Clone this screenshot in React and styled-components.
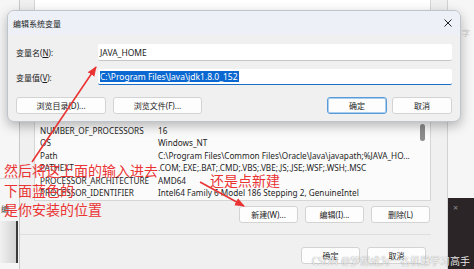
import styled, { createGlobalStyle } from "styled-components";

const GlobalStyle = createGlobalStyle`
  body {
    margin: 0;
    background: #f0f0f0;
  }
`;

const RED = "#ea3434";

const Desktop = styled.div`
  position: relative;
  width: 474px;
  height: 269px;
  overflow: hidden;
  display: grid;
  grid-template-columns: 20px 428px 26px;
  font-family: "Noto Sans", "Noto Sans CJK SC", sans-serif;
  color: #1b1b1b;
`;

/* window peeking in on the left */
const SideWindow = styled.div`
  display: flex;
  flex-direction: column;
  background: #f6f6f6;
  border-right: 1px solid #c9c9c9;
`;
const SideTop = styled.div`
  height: 178px;
  border-bottom: 1px solid #d6d6d6;
`;
const SideLabel = styled.div`
  padding: 24px 0 0 1px;
  font-size: 8px;
  color: #444;
`;
const SideBottom = styled.div`
  margin-top: auto;
  height: 42px;
  background: linear-gradient(90deg, #f1f1f1, #d3d3d3);
  border-right: 2px solid #3a3a3a;
  margin-right: 1px;
  margin-bottom: 6px;
`;

/* environment variables dialog behind */
const EnvDialog = styled.div`
  display: flex;
  flex-direction: column;
  padding: 0 16px 0 14px;
  background: #f0f0f0;
  border-right: 1px solid #d2d2d2;
`;
const UserList = styled.div`
  height: 60px;
  background: #fff;
  border: 1px solid #d6d6d6;
  border-top: none;
`;
const SystemList = styled.div`
  margin-top: 52px;
  height: 88px;
  box-sizing: border-box;
  display: flex;
  background: #fbfbfb;
  border: 1px solid #d6d6d6;
  overflow: hidden;
`;
const Rows = styled.div`
  flex: 1;
  min-width: 0;
  padding: 11px 0 0 5px;
`;
const Row = styled.div`
  display: grid;
  grid-template-columns: 118px auto;
  height: 12.4px;
  line-height: 12.4px;
  font-size: 8.2px;
  white-space: nowrap;
  color: #1e1e1e;
`;
const ScrollTrack = styled.div`
  width: 10px;
  padding-top: 10px;
`;
const Thumb = styled.div`
  width: 5px;
  height: 17px;
  border-radius: 3px;
  background: #8c8c8c;
`;
const ButtonRow = styled.div`
  display: flex;
  justify-content: flex-end;
  gap: ${(p) => p.$gap || 7}px;
  margin-top: ${(p) => p.$top}px;
  padding-right: ${(p) => p.$inset || 0}px;
`;
const Button = styled.button`
  width: ${(p) => p.$w || 59}px;
  height: 17px;
  box-sizing: border-box;
  padding: 0;
  background: #fdfdfd;
  border: 1px solid ${(p) => (p.$primary ? "#5a9ad8" : "#d3d3d3")};
  box-shadow: ${(p) => (p.$primary ? "inset 0 0 0 1px #a9cdef" : "none")};
  border-radius: 3px;
  font-family: inherit;
  font-size: 8px;
  color: #1b1b1b;
`;
const Separator = styled.div`
  margin: 11px 0 0 -14px;
  height: 1px;
  background: #dedede;
`;

/* right edge: other windows */
const RightStrip = styled.div`
  display: flex;
  flex-direction: column;
`;
const RightTop = styled.div`
  height: 198px;
  background: #f6f6f6;
  padding: 27px 0 0 14px;
  box-sizing: border-box;
  font-size: 8px;
  color: #c8c8c8;
`;
const DarkWindow = styled.div`
  flex: 1;
  background: #2c2528;
  padding: 3px 0 0 5px;
  color: #8d8d8d;
  font-size: 9px;
`;

/* edit dialog on top */
const EditDialog = styled.div`
  position: absolute;
  left: 7px;
  top: 10px;
  width: 454px;
  height: 112px;
  box-sizing: border-box;
  display: flex;
  flex-direction: column;
  background: #f0f0f0;
  border: 1px solid #bfc5cc;
  border-radius: 7px;
  box-shadow: 0 4px 12px rgba(0, 0, 0, 0.28);
  overflow: hidden;
`;
const TitleBar = styled.div`
  height: 24px;
  display: flex;
  align-items: center;
  justify-content: space-between;
  padding: 0 8px 0 5px;
  background: #edf1f7;
  font-size: 8px;
`;
const Form = styled.div`
  display: flex;
  flex-direction: column;
  gap: 8px;
  padding: 9px 8px 0 8px;
`;
const Field = styled.div`
  display: grid;
  grid-template-columns: 82px 1fr;
  align-items: center;
  font-size: 8px;
`;
const Input = styled.div`
  height: ${(p) => (p.$focused ? 16 : 17)}px;
  box-sizing: border-box;
  display: flex;
  align-items: center;
  padding-left: 2px;
  background: #fff;
  border-radius: 2px;
  border-bottom: 1px solid ${(p) => (p.$focused ? "#1a6ec4" : "#c6c6c6")};
  font-size: 8.5px;
  white-space: nowrap;
`;
const Selected = styled.span`
  background: #0b68d0;
  color: #fff;
  line-height: 11px;
  padding-right: 1px;
`;
const DialogButtons = styled.div`
  display: flex;
  gap: 7px;
  margin-top: 4px;
  .right {
    margin-left: auto;
    display: flex;
    gap: 5px;
  }
`;

/* red annotations */
const Note = styled.div`
  position: absolute;
  left: ${(p) => p.$x}px;
  top: ${(p) => p.$y}px;
  font-family: "Noto Sans CJK SC", sans-serif;
  font-size: 14px;
  line-height: 19.5px;
  color: ${RED};
  white-space: nowrap;
`;
const Arrows = styled.svg`
  position: absolute;
  left: 0;
  top: 0;
  pointer-events: none;
`;
const Watermark = styled.div`
  position: absolute;
  right: 4px;
  bottom: 1px;
  font-size: 10px;
  color: rgba(255, 255, 255, 0.92);
  text-shadow: 0 0 1px rgba(0, 0, 0, 0.5);
  white-space: nowrap;
`;

const systemVars = [
  ["NUMBER_OF_PROCESSORS", "16"],
  ["OS", "Windows_NT"],
  ["Path", "C:\\Program Files\\Common Files\\Oracle\\Java\\javapath;%JAVA_HO..."],
  ["PATHEXT", ".COM;.EXE;.BAT;.CMD;.VBS;.VBE;.JS;.JSE;.WSF;.WSH;.MSC"],
  ["PROCESSOR_ARCHITECTURE", "AMD64"],
  ["PROCESSOR_IDENTIFIER", "Intel64 Family 6 Model 186 Stepping 2, GenuineIntel"],
];

const CloseIcon = () => (
  <svg width="8" height="8" viewBox="0 0 8 8">
    <path d="M0.5 0.5 L7.5 7.5 M7.5 0.5 L0.5 7.5" stroke="#222" strokeWidth="1" />
  </svg>
);

const App = () => {
  return (
    <Desktop>
      <GlobalStyle />
      <SideWindow>
        <SideTop />
        <SideLabel>编</SideLabel>
        <SideBottom />
      </SideWindow>

      <EnvDialog>
        <UserList />
        <SystemList>
          <Rows>
            {systemVars.map(([name, value]) => (
              <Row key={name}>
                <span>{name}</span>
                <span>{value}</span>
              </Row>
            ))}
          </Rows>
          <ScrollTrack>
            <Thumb />
          </ScrollTrack>
        </SystemList>
        <ButtonRow $top={5} $inset={1}>
          <Button>新建(W)...</Button>
          <Button>编辑(I)...</Button>
          <Button>删除(L)</Button>
        </ButtonRow>
        <Separator />
        <ButtonRow $top={12} $inset={5}>
          <Button>确定</Button>
          <Button>取消</Button>
        </ButtonRow>
      </EnvDialog>

      <RightStrip>
        <RightTop>字</RightTop>
        <DarkWindow>×</DarkWindow>
      </RightStrip>

      <EditDialog>
        <TitleBar>
          <span>编辑系统变量</span>
          <CloseIcon />
        </TitleBar>
        <Form>
          <Field>
            <span>
              变量名(<u>N</u>):
            </span>
            <Input>JAVA_HOME</Input>
          </Field>
          <Field>
            <span>
              变量值(<u>V</u>):
            </span>
            <Input $focused>
              <Selected>C:\Program Files\Java\jdk1.8.0_152</Selected>
            </Input>
          </Field>
          <DialogButtons>
            <Button $w={90}>浏览目录(D)...</Button>
            <Button $w={89}>浏览文件(F)...</Button>
            <div className="right">
              <Button $w={60} $primary>
                确定
              </Button>
              <Button $w={60}>取消</Button>
            </div>
          </DialogButtons>
        </Form>
      </EditDialog>

      <Arrows width="474" height="269" viewBox="0 0 474 269">
        <defs>
          <marker
            id="head"
            markerUnits="userSpaceOnUse"
            markerWidth="10"
            markerHeight="10"
            refX="9"
            refY="5"
            orient="auto"
          >
            <path d="M0 1 L10 5 L0 9 Z" fill={RED} />
          </marker>
        </defs>
        <line x1="32" y1="162" x2="96" y2="67" stroke={RED} strokeWidth="1.6" markerEnd="url(#head)" />
        <line x1="200" y1="182" x2="244" y2="206" stroke={RED} strokeWidth="1.6" markerEnd="url(#head)" />
      </Arrows>

      <Note $x={4} $y={161}>
        然后将这上面的输入进去
        <br />
        下面蓝色的
        <br />
        是你安装的位置
      </Note>
      <Note $x={210} $y={171}>
        还是点新建
      </Note>

      <Watermark>CSDN @梦想成为一名机器学习高手</Watermark>
    </Desktop>
  );
};

export default App;
